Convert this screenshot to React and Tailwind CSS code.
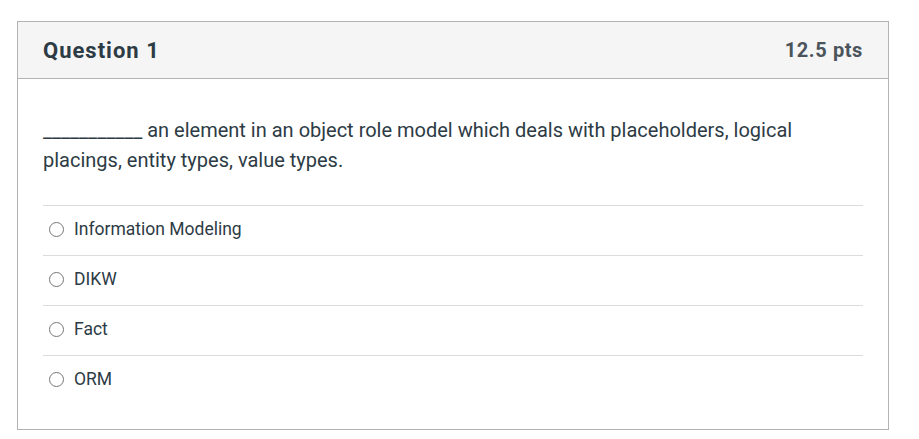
import React from 'react';

const answers = ['Information Modeling', 'DIKW', 'Fact', 'ORM'];

function Answer({ label }) {
  return (
    <div className="flex items-center h-[50px] border-t border-[#dcdcdc] pl-[6px] pb-[2px]">
      <span className="w-[15px] h-[15px] rounded-full border border-[#777] bg-white" />
      <span className="ml-[10px] text-[17.5px] text-[#2d3b45]">{label}</span>
    </div>
  );
}

export default function App() {
  return (
    <div
      className="bg-white w-[919px] h-[439px] pt-[21px] pl-[17px]"
      style={{ fontFamily: 'Roboto, "Liberation Sans", sans-serif' }}
    >
      <div className="w-[872px] border border-[#b3b3b3]">
        <div className="flex items-center justify-between h-[57px] px-[25px] bg-[#f5f5f5] border-b border-[#b3b3b3]">
          <h2 className="text-[22px] tracking-[1px] font-bold text-[#2d3b45]">Question 1</h2>
          <span className="text-[20px] tracking-[0.6px] font-bold text-[#4b545b]">12.5 pts</span>
        </div>
        <div className="px-[25px] pt-[36px] pb-[24px]">
          <p className="text-[20px] leading-[30px] text-[#2d3b45] mb-[30px]">
            ___________ an element in an object role model which deals with placeholders, logical
            placings, entity types, value types.
          </p>
          <div className="flex flex-col">
            {answers.map(a => (
              <Answer key={a} label={a} />
            ))}
          </div>
        </div>
      </div>
    </div>
  );
}
